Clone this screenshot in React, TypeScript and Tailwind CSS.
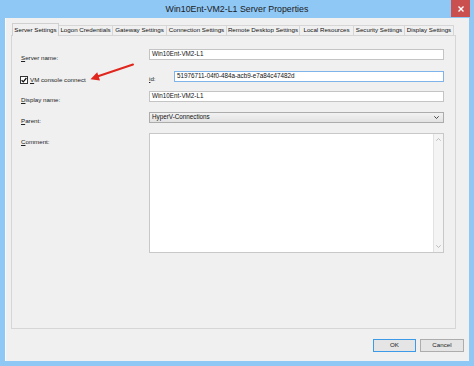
import React from 'react';

const tabs = [
  { label: 'Server Settings', w: 47 },
  { label: 'Logon Credentials', w: 54 },
  { label: 'Gateway Settings', w: 54 },
  { label: 'Connection Settings', w: 60 },
  { label: 'Remote Desktop Settings', w: 73 },
  { label: 'Local Resources', w: 54 },
  { label: 'Security Settings', w: 51 },
  { label: 'Display Settings', w: 49 },
];

const TextBox: React.FC<{ value?: string; focused?: boolean }> = ({ value, focused }) => (
  <div
    className={`flex-1 h-[11px] bg-white border flex items-center pl-[2px] text-[6.3px] leading-none text-[#111] ${
      focused ? 'border-[#7eb4ea]' : 'border-[#c4c4c4]'
    }`}
  >
    {value}
  </div>
);

const Label: React.FC<{ k: string; rest: string }> = ({ k, rest }) => (
  <span className="text-[6.2px] leading-[8px] text-[#222]">
    <u>{k}</u>
    {rest}
  </span>
);

export default function App() {
  return (
    <div className="w-[474px] h-[366px] bg-[#8fc7f5] flex flex-col relative font-['Liberation_Sans',Arial,sans-serif] overflow-hidden">
      {/* Title bar */}
      <div className="h-[18px] relative flex items-center justify-center">
        <span className="text-[8.8px] text-[#1b1b1b] leading-none">Win10Ent-VM2-L1 Server Properties</span>
        <div className="absolute right-[4px] top-0 w-[19px] h-[17px] bg-[#c9504f] flex items-center justify-center">
          <svg width="6" height="6" viewBox="0 0 6 6">
            <path d="M0.5 0.5 L5.5 5.5 M5.5 0.5 L0.5 5.5" stroke="white" strokeWidth="1.4" />
          </svg>
        </div>
      </div>

      {/* Client area */}
      <div className="flex-1 mx-[5px] mb-[5px] bg-[#f0f0f0] border-l border-[#fafafa] flex flex-col pl-[5px] pr-[5px] pt-[5px]">
        {/* Tabs */}
        <div className="flex items-end h-[12px] pl-[1px] relative z-10">
          {tabs.map((t, i) =>
            i === 0 ? (
              <div
                key={t.label}
                style={{ width: t.w }}
                className="h-[13px] -mb-px bg-[#f0f0f0] border border-b-0 border-[#d0d0d0] flex items-center justify-center text-[6.2px] leading-none text-[#111]"
              >
                {t.label}
              </div>
            ) : (
              <div
                key={t.label}
                style={{ width: t.w }}
                className="h-[10px] bg-[#f0f0f0] border border-l-0 border-b-0 border-[#d6d6d6] flex items-center justify-center text-[6.2px] leading-none text-[#111]"
              >
                {t.label}
              </div>
            )
          )}
        </div>

        {/* Panel */}
        <div className="w-[445px] h-[294px] border border-[#d6d6d6] bg-[#f0f0f0] pl-[9px] pr-[11px] pt-[13px] flex flex-col">
          <div className="flex items-start h-[11px]">
            <div className="w-[128px] pt-[5px] flex">
              <Label k="S" rest="erver name:" />
            </div>
            <TextBox value="Win10Ent-VM2-L1" />
          </div>

          <div className="flex items-start h-[11px] mt-[11px]">
            <div className="w-[128px] pt-[5px] -ml-px flex items-center gap-[2px]">
              <div className="w-[8px] h-[8px] bg-white border border-[#333] flex items-center justify-center">
                <svg width="6" height="6" viewBox="0 0 6 6">
                  <path d="M0.6 3.2 L2.3 4.9 L5.4 1" stroke="#111" strokeWidth="1.3" fill="none" />
                </svg>
              </div>
              <Label k="V" rest="M console connect" />
            </div>
            <div className="w-[26px] pt-[4px] pl-px flex">
              <Label k="i" rest="d:" />
            </div>
            <TextBox value="51976711-04f0-484a-acb9-e7a84c47482d" focused />
          </div>

          <div className="flex items-start h-[11px] mt-[9px]">
            <div className="w-[128px] pt-[5px] flex">
              <Label k="D" rest="isplay name:" />
            </div>
            <TextBox value="Win10Ent-VM2-L1" />
          </div>

          <div className="flex items-start h-[11px] mt-[10px]">
            <div className="w-[128px] pt-[5px] flex">
              <Label k="P" rest="arent:" />
            </div>
            <div className="flex-1 h-[11px] border border-[#acacac] bg-gradient-to-b from-[#f2f2f2] to-[#e2e2e2] flex items-center justify-between pl-[2px] pr-[4px] text-[6.3px] leading-none text-[#111]">
              <span>HyperV-Connections</span>
              <svg width="5" height="3" viewBox="0 0 5 3">
                <path d="M0.3 0.3 L2.5 2.5 L4.7 0.3" stroke="#333" strokeWidth="0.9" fill="none" />
              </svg>
            </div>
          </div>

          <div className="flex items-start mt-[10px]">
            <div className="w-[128px] pt-[5px] flex">
              <Label k="C" rest="omment:" />
            </div>
            <div className="flex-1 h-[120px] bg-white border border-[#c8c8c8] flex justify-end">
              <div className="w-[10px] h-full bg-[#f4f4f4] border-l border-[#e2e2e2] flex flex-col items-center justify-between py-[4px]">
                <svg width="5" height="3" viewBox="0 0 5 3">
                  <path d="M0.3 2.7 L2.5 0.5 L4.7 2.7" stroke="#b5b5b5" strokeWidth="0.9" fill="none" />
                </svg>
                <svg width="5" height="3" viewBox="0 0 5 3">
                  <path d="M0.3 0.3 L2.5 2.5 L4.7 0.3" stroke="#b5b5b5" strokeWidth="0.9" fill="none" />
                </svg>
              </div>
            </div>
          </div>
        </div>

        {/* Buttons */}
        <div className="flex justify-end gap-[4px] mt-[10px]">
          <button className="w-[43px] h-[13px] border border-[#3c9ae8] bg-[#e5e5e5] text-[6.2px] leading-none text-[#222] flex items-center justify-center">
            OK
          </button>
          <button className="w-[44px] h-[13px] border border-[#adadad] bg-[#e5e5e5] text-[6.2px] leading-none text-[#222] flex items-center justify-center">
            Cancel
          </button>
        </div>
      </div>

      {/* Red annotation arrow */}
      <svg className="absolute left-0 top-0 pointer-events-none" width="474" height="366" viewBox="0 0 474 366">
        <line x1="133" y1="64.5" x2="98" y2="76.2" stroke="#e0261d" strokeWidth="2" strokeLinecap="round" />
        <polygon points="90.5,79.3 97.2,72.2 100,80.4" fill="#e0261d" />
      </svg>
    </div>
  );
}
